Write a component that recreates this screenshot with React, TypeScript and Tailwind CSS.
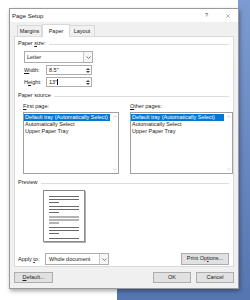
import { X } from 'lucide-react';

const ITEMS = ['Default tray (Automatically Select)', 'Automatically Select', 'Upper Paper Tray'];

function Chevron() {
  return (
    <svg width="5" height="3" viewBox="0 0 5 3" className="block">
      <path d="M0.5 0.5 L2.5 2.5 L4.5 0.5" fill="none" stroke="#606060" strokeWidth="0.8" />
    </svg>
  );
}

function Spinner() {
  return (
    <div className="flex flex-col items-center justify-center w-[7px] h-full gap-[1px]">
      <svg width="4" height="2" viewBox="0 0 4 2"><path d="M0 2 L2 0 L4 2 Z" fill="#404040" /></svg>
      <svg width="4" height="2" viewBox="0 0 4 2"><path d="M0 0 L2 2 L4 0 Z" fill="#404040" /></svg>
    </div>
  );
}

function GroupLabel({ text, className = '' }: { text: React.ReactNode; className?: string }) {
  return (
    <div className={`flex items-center gap-[3px] h-[6px] ${className}`}>
      <span className="leading-none">{text}</span>
      <div className="flex-1 h-px bg-[#dcdcdc]" />
    </div>
  );
}

function ListBox({ label }: { label: React.ReactNode }) {
  return (
    <div className="flex flex-col">
      <span className="leading-none h-[6px] mb-[2px]">{label}</span>
      <div className="relative h-[62px] border border-[#a0a0a0] bg-white">
        <div className="flex flex-col pt-[1px] pr-[8px]">
          {ITEMS.map((t, i) => (
            <div
              key={t}
              className={`h-[7px] leading-[7px] px-[1px] whitespace-nowrap ${i === 0 ? 'bg-[#0078d7] text-white' : ''}`}
            >
              {t}
            </div>
          ))}
        </div>
        <div className="absolute right-0 top-0 bottom-0 w-[7px] flex flex-col justify-between items-center py-[2px]">
          <svg width="4" height="3" viewBox="0 0 4 3"><path d="M0.3 2.5 L2 0.8 L3.7 2.5" fill="none" stroke="#c0c0c0" strokeWidth="0.7" /></svg>
          <svg width="4" height="3" viewBox="0 0 4 3"><path d="M0.3 0.5 L2 2.2 L3.7 0.5" fill="none" stroke="#c0c0c0" strokeWidth="0.7" /></svg>
        </div>
      </div>
    </div>
  );
}

function PagePreview() {
  const group = (
    <div className="flex flex-col gap-[2px]">
      <div className="h-[1px] w-[30px] bg-[#6a6a6a]" />
      <div className="h-[1px] w-[30px] bg-[#6a6a6a]" />
      <div className="h-[1px] w-[10px] bg-[#6a6a6a]" />
    </div>
  );
  return (
    <div className="w-[42px] h-[52px] bg-white border border-[#8a8a8a] shadow-[1px_1px_0_#b0b0b0] flex flex-col items-start pl-[5px] pt-[5px] gap-[3px]">
      {group}
      {group}
      <div className="flex flex-col gap-[1px]">
        <div className="h-[2px] w-[30px] bg-[#b4b4b4]" />
        <div className="h-[2px] w-[30px] bg-[#b4b4b4]" />
        <div className="h-[2px] w-[10px] bg-[#b4b4b4]" />
      </div>
      {group}
      <div className="h-[1px] w-[30px] bg-[#6a6a6a] mt-[1px]" />
    </div>
  );
}

function Button({ children, className = '' }: { children: React.ReactNode; className?: string }) {
  return (
    <div className={`h-[11px] flex items-center justify-center bg-[#e1e1e1] border border-[#adadad] leading-none ${className}`}>
      {children}
    </div>
  );
}

export default function App() {
  return (
    <div
      className="relative w-[250px] h-[300px] overflow-hidden bg-white text-[5.5px] text-[#1a1a1a]"
      style={{ fontFamily: '"Liberation Sans", Arial, sans-serif' }}
    >
      {/* desktop behind the dialog */}
      <div className="absolute left-[238px] top-0 right-0 bottom-0 bg-gradient-to-b from-[#7b9bd2] to-[#5576b0]" />
      <div className="absolute left-[117px] top-[288px] right-0 bottom-0 bg-[#5576b0]" />

      {/* dialog window */}
      <div className="absolute left-[9px] top-[8px] w-[230px] h-[281px] bg-[#f0f0f0] border border-[#9a9a9a] shadow-[1px_2px_4px_rgba(0,0,0,0.35)] flex flex-col">
        <div className="h-[13px] bg-white flex items-center pl-[2px] pr-[7px] text-[6px]">
          <span className="leading-none">Page Setup</span>
          <span className="ml-auto mr-[17px] text-[#555]">?</span>
          <X className="w-[6px] h-[6px] text-[#444]" strokeWidth={1.5} />
        </div>

        {/* tabs */}
        <div className="flex items-end pl-[7px] h-[14px]">
          <div className="h-[11px] w-[25px] flex items-center justify-center border border-b-0 border-[#d9d9d9] bg-[#f0f0f0]">Margins</div>
          <div className="h-[13px] w-[28px] flex items-center justify-center border border-b-0 border-[#d9d9d9] bg-white relative top-[1px]">Paper</div>
          <div className="h-[11px] w-[25px] flex items-center justify-center border border-b-0 border-l-0 border-[#d9d9d9] bg-[#f0f0f0]">Layout</div>
        </div>

        {/* tab panel */}
        <div className="mx-[4px] h-[231px] bg-white border border-[#d9d9d9] flex flex-col px-[3px] pt-[4px] pr-[4px]">
          <GroupLabel text={<>Paper <u>s</u>ize:</>} />
          <div className="ml-[6px] mt-[4px] w-[69px] h-[12px] border border-[#adadad] flex items-center">
            <span className="pl-[2px] flex-1">Letter</span>
            <div className="w-[9px] h-full border-l border-[#c8c8c8] bg-[#f6f6f6] flex items-center justify-center">
              <Chevron />
            </div>
          </div>
          <div className="ml-[6px] mt-[2px] flex items-center h-[10px]">
            <span className="w-[22px]"><u>W</u>idth:</span>
            <div className="w-[46px] h-full border border-[#adadad] flex items-center">
              <span className="pl-[2px] flex-1">8.5"</span>
              <Spinner />
            </div>
          </div>
          <div className="ml-[6px] mt-[2px] flex items-center h-[10px]">
            <span className="w-[22px]">H<u>e</u>ight:</span>
            <div className="w-[46px] h-full border border-[#adadad] flex items-center">
              <span className="pl-[2px] flex-1">13"<span className="inline-block w-px h-[6px] bg-black align-middle" /></span>
              <Spinner />
            </div>
          </div>

          <GroupLabel text="Paper source" className="mt-[6px]" />
          <div className="mt-[5px] ml-[5px] grid grid-cols-[96px_103px] gap-x-[11px]">
            <ListBox label={<><u>F</u>irst page:</>} />
            <ListBox label={<><u>O</u>ther pages:</>} />
          </div>
          <GroupLabel text="Preview" className="mt-[6px]" />
          <div className="ml-[25px] mt-[4px]">
            <PagePreview />
          </div>
          <div className="mt-[11px] flex items-center h-[12px]">
            <span className="w-[27px]">Apply <u>t</u>o:</span>
            <div className="w-[64px] h-full border border-[#adadad] flex items-center">
              <span className="pl-[3px] flex-1">Whole document</span>
              <div className="w-[9px] h-full border-l border-[#c8c8c8] bg-[#f6f6f6] flex items-center justify-center">
                <Chevron />
              </div>
            </div>
            <Button className="ml-auto w-[48px] h-[12px]">Print Op<u>t</u>ions...</Button>
          </div>
        </div>

        {/* bottom buttons */}
        <div className="flex items-center px-[4px] mt-[5px]">
          <Button className="w-[39px]"><u>D</u>efault...</Button>
          <Button className="ml-auto w-[38px] border-[#0078d7]">OK</Button>
          <Button className="ml-[5px] w-[38px]">Cancel</Button>
        </div>
      </div>
    </div>
  );
}
